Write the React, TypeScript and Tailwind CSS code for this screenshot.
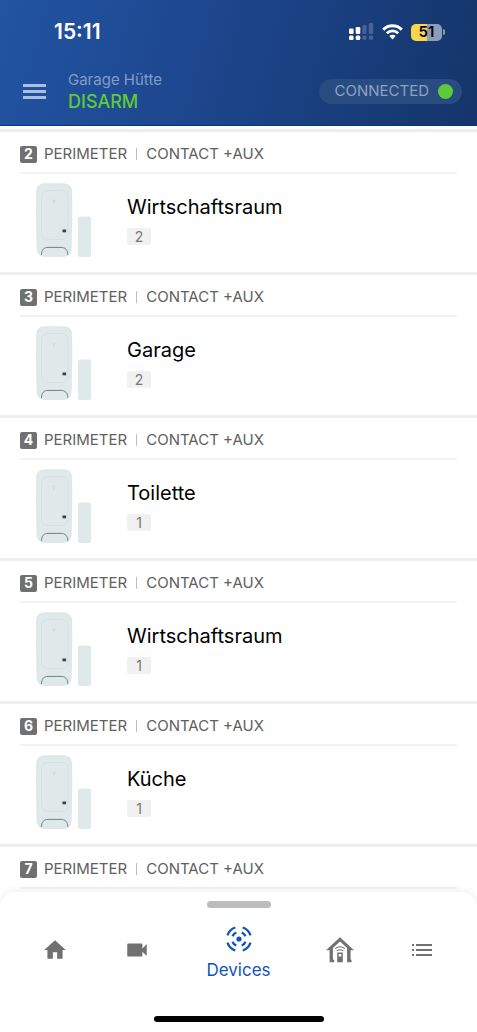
import { MdHome, MdVideocam } from "react-icons/md"

const devices = [
  { id: 2, name: "Wirtschaftsraum", group: 2 },
  { id: 3, name: "Garage", group: 2 },
  { id: 4, name: "Toilette", group: 1 },
  { id: 5, name: "Wirtschaftsraum", group: 1 },
  { id: 6, name: "Küche", group: 1 },
  { id: 7 },
]

function SignalIcon() {
  return (
    <svg width="26" height="18" viewBox="0 0 26 18" fill="white" aria-hidden="true">
      <rect x="1" y="5.5" width="4.6" height="5.5" rx="1.2" />
      <rect x="7.7" y="4" width="4.6" height="7" rx="1.2" />
      <rect x="14.4" y="2" width="4.2" height="9" rx="1.2" opacity="0.2" />
      <rect x="20.8" y="0" width="4.4" height="11" rx="1.2" opacity="0.2" />
      <rect x="1" y="12.4" width="4.6" height="4.6" rx="1.5" />
      <rect x="7.7" y="12.4" width="4.6" height="4.6" rx="1.5" />
      <rect x="14.4" y="12.6" width="4.2" height="4.2" rx="1.5" opacity="0.2" />
      <rect x="20.8" y="12.6" width="4.4" height="4.2" rx="1.5" opacity="0.2" />
    </svg>
  )
}

function WifiIcon() {
  return (
    <svg width="21" height="16" viewBox="0 0 21 16" fill="none" stroke="white" aria-hidden="true">
      <path d="M1.2 5.6a13.2 13.2 0 0 1 18.6 0" strokeWidth="2.9" />
      <path d="M4.8 9.3a8.1 8.1 0 0 1 11.4 0" strokeWidth="2.8" />
      <path d="M7.3 12.1a4.6 4.6 0 0 1 6.4 0L10.5 15.4z" fill="white" stroke="none" />
    </svg>
  )
}

function ContactSensor() {
  return (
    <svg width="56" height="76" viewBox="0 0 56 76" fill="none" aria-hidden="true">
      <path d="M8.5 .8h19c5.2 0 8 2.8 8.2 8l.1 27-.6 29c-.2 5.800-2.800 8.600-8.200 8.600H9c-5.400 0-7.800-2.800-8-8.600L.5 36 .6 8.800C.8 3.600 3.400.8 8.500.8z" fill="#e0e9ea" stroke="#d3dee0" strokeWidth=".6" />
      <rect x="5.500" y="7.500" width="26.500" height="49" rx="6" stroke="#d3dddf" strokeWidth=".8" />
      <path d="M16 16.500l2 2 2-2M18 18.500v2" stroke="#c5d1d4" strokeWidth=".9" />
      <rect x="26.500" y="46.500" width="3.600" height="2.800" fill="#35464a" />
      <path d="M5.500 72c0-5.200 2.400-7.600 6.500-7.600h13c4.100 0 6.800 2.400 6.800 7.600" stroke="#717f87" strokeWidth="1" />
      <rect x="42" y="33.500" width="13" height="40.500" rx="2" fill="#e0e9ea" />
    </svg>
  )
}

function DevicesIcon() {
  return (
    <svg width="26" height="26" viewBox="0 0 26 26" fill="none" stroke="currentColor" strokeWidth="2.300" aria-hidden="true">
      <circle cx="13" cy="13" r="2.600" fill="currentColor" stroke="none" />
      <path d="M1.500 9.300A12.200 12.200 0 0 1 9.300 1.500M16.700 1.500a12.200 12.200 0 0 1 7.800 7.800M24.500 16.700a12.200 12.200 0 0 1-7.800 7.800M9.300 24.500a12.200 12.200 0 0 1-7.800-7.800" />
      <path d="M6.500 10.300A7 7 0 0 1 10.300 6.500M15.700 6.500a7 7 0 0 1 3.800 3.800M19.500 15.700a7 7 0 0 1-3.800 3.800M10.300 19.500a7 7 0 0 1-3.800-3.800" />
    </svg>
  )
}

function SmartHomeIcon() {
  return (
    <svg width="28" height="26" viewBox="0 0 28 26" fill="none" stroke="currentColor" aria-hidden="true">
      <path d="M0 13.200L14 .3l14 12.900h-3.400v9.600h.9v2.400h-4.400V11L14 4.400 6.900 11v11.800h1.300v2.400H3.600V13.200z" fill="currentColor" stroke="none" />
      <path d="M9 11.600q5-3.800 10 0M10.700 13.900q3.300-2.400 6.600 0" strokeWidth="1.100" />
      <path d="M11.200 15.500h5.600v9.700h-5.600zM12.700 17v2.600h2.600v-2.600z" fill="currentColor" fillRule="evenodd" stroke="none" />
    </svg>
  )
}

function ListIcon() {
  return (
    <svg width="20" height="14" viewBox="0 0 20 14" fill="currentColor" aria-hidden="true">
      <path d="M0 1h2v2H0zM4 1h16v2H4zM0 6h2v2H0zM4 6h16v2H4zM0 11h2v2H0zM4 11h16v2H4z" />
    </svg>
  )
}

export default function App() {
  return (
    <div className="flex h-screen flex-col overflow-hidden bg-white font-['Inter','Liberation_Sans',sans-serif] text-black">
      {/* Header */}
      <header className="shrink-0 border-b border-[#04357f] bg-[linear-gradient(105deg,#2254a3_0%,#1c4489_50%,#15356a_100%)]">
        <div className="flex h-16 items-center justify-between pr-8 pl-[54px]">
          <span className="text-[21px] font-semibold text-white">15:11</span>
          <div className="flex items-center gap-2">
            <SignalIcon />
            <WifiIcon />
            <div className="flex items-center gap-px">
              <span className="flex h-[17px] w-[31px] items-center justify-center rounded-[5px] bg-[linear-gradient(90deg,#fad749_51%,#8c9db8_51%)] text-[15px] font-semibold">
                51
              </span>
              <span className="h-1.5 w-0.5 rounded-r bg-[#8c9db8]" />
            </div>
          </div>
        </div>
        <div className="flex h-[61px] items-start justify-between pr-[15px] pl-[23px]">
          <div className="flex">
            <button aria-label="Menu" className="mt-5 flex h-[15px] w-[23px] flex-col justify-between">
              <span className="h-[3px] w-full bg-[#aabfe0]" />
              <span className="h-[3px] w-full bg-[#aabfe0]" />
              <span className="h-[3px] w-full bg-[#aabfe0]" />
            </button>
            <div className="ml-[22px] pt-[5px]">
              <p className="text-[15px] leading-[22px] text-[#819dc8]">Garage Hütte</p>
              <p className="text-lg leading-[22px] font-medium text-[#5fc936]">DISARM</p>
            </div>
          </div>
          <div className="mt-[15px] flex h-[25px] items-center gap-[9px] rounded-full bg-[#284c80] pr-[9px] pl-[15px]">
            <span className="text-[15px] text-[#8da2c2]">CONNECTED</span>
            <span className="size-[15px] rounded-full bg-[#60c93b]" />
          </div>
        </div>
      </header>

      {/* Devices */}
      <main className="min-h-0 flex-1 overflow-hidden pt-[3px]">
        {devices.map((device) => (
          <section key={device.id} className="h-[143px] border-t-[3px] border-[#eeeeee] px-5">
            <div className="flex h-[42px] items-center border-b-2 border-[#f2f2f2] pt-1 text-[15px] text-[#606060]">
              <span className="flex size-[17px] items-center justify-center rounded-xs bg-[#707070] text-sm font-bold text-white">
                {device.id}
              </span>
              <span className="ml-[7px]">PERIMETER</span>
              <span className="mx-[9px] h-3 w-px bg-[#bdbdbd]" />
              <span>CONTACT +AUX</span>
            </div>
            {device.name && (
              <div className="flex pt-[9px] pl-4">
                <ContactSensor />
                <div className="ml-[35px] pt-3">
                  <h2 className="text-xl leading-6">{device.name}</h2>
                  <span className="mt-[9px] flex h-[17px] w-6 items-center justify-center rounded-xs bg-[#f1f1f1] text-sm text-[#777]">
                    {device.group}
                  </span>
                </div>
              </div>
            )}
          </section>
        ))}
      </main>

      {/* Bottom navigation */}
      <nav className="relative -mt-4 shrink-0 rounded-t-2xl bg-white shadow-[0_-2px_8px_rgba(0,0,0,0.06)]">
        <div className="mx-auto mt-[9px] h-[7px] w-16 rounded-full bg-[#bdbdbd]" />
        <div className="flex h-[84px] items-center px-3.5 text-[#717171]">
          <button aria-label="Home" className="flex flex-1 justify-center">
            <MdHome size={26} />
          </button>
          <button aria-label="Cameras" className="flex flex-1 justify-center">
            <MdVideocam size={26} />
          </button>
          <button className="flex w-[120px] flex-col items-center gap-2 pt-1.5 text-[#1053bd]">
            <DevicesIcon />
            <span className="text-[17px] leading-5">Devices</span>
          </button>
          <button aria-label="Rooms" className="flex flex-1 justify-center">
            <SmartHomeIcon />
          </button>
          <button aria-label="Notifications" className="flex flex-1 justify-center">
            <ListIcon />
          </button>
        </div>
        <div className="mx-auto mt-6 mb-2.5 h-1.5 w-[170px] rounded-full bg-black" />
      </nav>
    </div>
  )
}
